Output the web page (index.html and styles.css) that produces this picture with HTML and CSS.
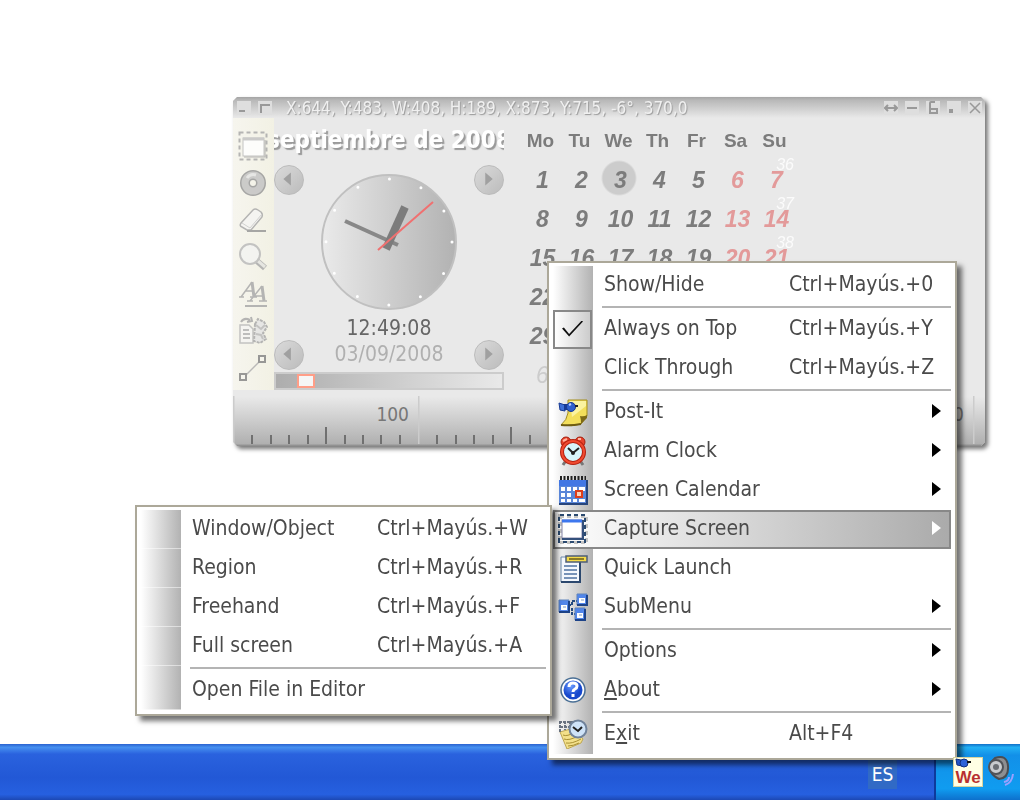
FILE: index.html
```
<!DOCTYPE html>
<html lang="en">
<head>
  <meta charset="utf-8">
  <title>Screen Calendar</title>
  <link rel="stylesheet" href="styles.css">
</head>
<body>
  <main class="desktop">
    <section class="widget">
      <div class="widget-body">
        <header class="titlebar">
          <button class="tb-button" aria-label="Minimize"><svg viewBox="0 0 14 14"><path d="M2 10h6" stroke-width="2"/></svg></button>
          <button class="tb-button" aria-label="Corner"><svg viewBox="0 0 14 14"><path d="M3 12V4h9" stroke-width="2"/></svg></button>
          <span class="title">X:644, Y:483, W:408, H:189, X:873, Y:715, -6°, 370,0</span>
          <button class="tb-button" aria-label="Width"><svg viewBox="0 0 14 14"><path d="M1 7h12M4 4L1 7l3 3M10 4l3 3-3 3" stroke-width="2"/></svg></button>
          <button class="tb-button" aria-label="Roll up"><svg viewBox="0 0 14 14"><path d="M2 7h10" stroke-width="2"/></svg></button>
          <button class="tb-button" aria-label="Lock"><svg viewBox="0 0 14 14"><path d="M4 8V2q0-1 1-1h4" stroke-width="2"/><path d="M4 8h7v4H4z" stroke-width="2"/></svg></button>
          <button class="tb-button" aria-label="Dot"><svg viewBox="0 0 14 14"><path d="M2 10h4" stroke-width="4"/></svg></button>
          <button class="tb-button" aria-label="Close"><svg viewBox="0 0 14 14"><path d="M2 2l10 10M12 2L2 12" stroke-width="1.5"/></svg></button>
        </header>

        <div class="content">
          <nav class="tools">
            <button class="tool" aria-label="Capture">
              <svg viewBox="0 0 30 30"><rect x="1.5" y="1.5" width="27" height="27" fill="none" stroke="#aaa" stroke-width="2" stroke-dasharray="4 3"/><rect x="5" y="7" width="21" height="18" fill="#fff" stroke="#bbb"/><path d="M5 8h21" stroke="#c4c4c4" stroke-width="3"/><path d="M6 26h21V9" fill="none" stroke="#aaa"/></svg>
            </button>
            <button class="tool" aria-label="Color">
              <svg viewBox="0 0 30 30"><circle cx="15" cy="15" r="8" fill="none" stroke="#999" stroke-width="10"/><circle cx="15" cy="15" r="8" fill="none" stroke="#c4c4c4" stroke-width="7"/><path d="M9 10a8 8 0 0 1 9-3" fill="none" stroke="#e4e4e4" stroke-width="3"/></svg>
            </button>
            <button class="tool" aria-label="Eraser">
              <svg viewBox="0 0 30 30"><path d="M3 18L15 5q2-2 5 0l3 2q2 2 1 5L13 25H9l-5-3q-3-1-1-4z" fill="#f5f5f3" stroke="#aaa" stroke-width="1.5"/><path d="M4 18l8 5L24 9" fill="none" stroke="#ccc"/><path d="M9 26h19" stroke="#999" stroke-width="2"/></svg>
            </button>
            <button class="tool" aria-label="Magnifier">
              <svg viewBox="0 0 30 30"><path d="M19 19l8 7" stroke="#aaa" stroke-width="6"/><path d="M20 19l7 6" stroke="#e4e4e0" stroke-width="3"/><circle cx="12" cy="12" r="10" fill="#f3f4f2" stroke="#bbb" stroke-width="2"/></svg>
            </button>
            <button class="tool" aria-label="Text">
              <svg viewBox="0 0 30 30"><path d="M3 18L14 3M7 12h8M1 18h5M12 18h7M12 22L24 7M17 17h8M9 22h6M21 22h8" fill="none" stroke="#aaa" stroke-width="1.5"/><path d="M14 3l2 15M24 7l2 15" stroke="#aaa" stroke-width="3"/><path d="M7 27h22" stroke="#aaa" stroke-width="2"/></svg>
            </button>
            <button class="tool" aria-label="Convert">
              <svg viewBox="0 0 30 30"><path d="M2 9h9l4 4v14H2z" fill="#f5f5f3" stroke="#bbb" stroke-width="1.5"/><path d="M5 14h6M5 18h7M5 22h7" stroke="#b4b4b4" stroke-width="2"/><path d="M3 6q3-5 9-2M9 6l5-1-1-4" fill="none" stroke="#aaa" stroke-width="2"/><path d="M17 8l3-5 6 3 3 5-4 6 3 6-6 4-6-2z" fill="#e4e4e4" stroke="#aaa" stroke-width="2" stroke-dasharray="3 1"/><path d="M18 9l5 4 4-4M18 18l5 1 2 4" fill="none" stroke="#bbb" stroke-width="2"/></svg>
            </button>
            <button class="tool" aria-label="Line">
              <svg viewBox="0 0 30 30"><path d="M7 23L22 8" stroke="#b0b0b0" stroke-width="1.5"/><path d="M2 21h6v6H2zM21 3h6v6h-6z" fill="#f7f6ee" stroke="#888" stroke-width="2"/></svg>
            </button>
          </nav>

          <section class="clock-panel">
            <h2 class="month">septiembre de 2008</h2>
            <div class="clock-row">
              <button class="round" aria-label="Previous month"><svg viewBox="0 0 30 30"><path d="M17 7v14l-8-7z"/></svg></button>
              <svg class="clock" viewBox="0 0 138 138">
                <defs>
                  <linearGradient id="face" x1="0" x2="1"><stop offset="0" stop-color="#eaeaea"/><stop offset="1" stop-color="#b2b2b2"/></linearGradient>
                </defs>
                <circle cx="69" cy="69" r="67" fill="url(#face)" stroke="#c0c0c0" stroke-width="2"/>
                <circle cx="69" cy="69" r="63" fill="none" stroke="#fff" stroke-width="3" stroke-linecap="round" stroke-dasharray="0 32.987"/>
                <path d="M25 48L78 72" stroke="#888" stroke-width="4"/>
                <path d="M85 34L66 76" stroke="#7c7c7c" stroke-width="8"/>
                <path d="M113 29L58 77" stroke="#f07070" stroke-width="2"/>
              </svg>
              <button class="round" aria-label="Next month"><svg viewBox="0 0 30 30"><path d="M11 7v14l8-7z"/></svg></button>
            </div>
            <div class="time-row">
              <button class="round" aria-label="Previous day"><svg viewBox="0 0 30 30"><path d="M17 7v14l-8-7z"/></svg></button>
              <div class="readout">
                <time class="time">12:49:08</time>
                <time class="date">03/09/2008</time>
              </div>
              <button class="round" aria-label="Next day"><svg viewBox="0 0 30 30"><path d="M11 7v14l8-7z"/></svg></button>
            </div>
            <input class="opacity" type="range" min="0" max="100" value="10" aria-label="Opacity">
          </section>

          <table class="calendar">
            <thead>
              <tr><th>Mo</th><th>Tu</th><th>We</th><th>Th</th><th>Fr</th><th>Sa</th><th>Su</th></tr>
            </thead>
            <tbody>
              <tr><td>1</td><td>2</td><td class="today">3</td><td>4</td><td>5</td><td class="off">6</td><td class="off">7<span class="week">36</span></td></tr>
              <tr><td>8</td><td>9</td><td>10</td><td>11</td><td>12</td><td class="off">13</td><td class="off">14<span class="week">37</span></td></tr>
              <tr><td>15</td><td>16</td><td>17</td><td>18</td><td>19</td><td class="off">20</td><td class="off">21<span class="week">38</span></td></tr>
              <tr><td>22</td><td>23</td><td>24</td><td>25</td><td>26</td><td class="off">27</td><td class="off">28<span class="week">39</span></td></tr>
              <tr><td>29</td><td>30</td><td class="other">1</td><td class="other">2</td><td class="other">3</td><td class="other">4</td><td class="other">5</td></tr>
              <tr><td class="other">6</td><td class="other">7</td><td class="other">8</td><td class="other">9</td><td class="other">10</td><td class="other">11</td><td class="other">12</td></tr>
            </tbody>
          </table>
        </div>

        <footer class="ruler">
          <div class="mark">100</div>
          <div class="mark">200</div>
          <div class="mark">300</div>
          <div class="mark">400</div>
          <svg class="ticks">
            <defs>
              <pattern id="scale" width="185" height="50" patternUnits="userSpaceOnUse">
                <path d="M19 39v9M38 39v9M56 39v9M75 39v9M112 39v9M130 39v9M148 39v9M167 39v9M93 31v17" stroke="#707070" stroke-width="2"/>
                <path d="M.5 0v48" stroke="#ccc" stroke-width="2"/>
              </pattern>
            </defs>
            <rect width="100%" height="50" fill="url(#scale)"/>
          </svg>
        </footer>
      </div>
    </section>

    <div class="menu menu-main" role="menu">
      <button class="item"><span class="gutter"></span><span class="label">Show/Hide</span><span class="key">Ctrl+Mayús.+0</span></button>
      <hr class="sep">
      <label class="item" for="on-top"><span class="gutter"><input class="tick" type="checkbox" id="on-top" checked></span><span class="label">Always on Top</span><span class="key">Ctrl+Mayús.+Y</span></label>
      <button class="item"><span class="gutter"></span><span class="label">Click Through</span><span class="key">Ctrl+Mayús.+Z</span></button>
      <hr class="sep">
      <button class="item">
        <span class="gutter"><svg class="icon" viewBox="0 0 30 30"><path d="M10 3h19v16l-6 8q-9 3-20 1 6-5 7-12z" fill="#f3df5c" stroke="#a38c1c"/><path d="M12 4h16v5L14 20z" fill="#fbf3a0"/><path d="M23 27q0-5-1-8 4 1 7-1v3z" fill="#7d6a18"/><path d="M3 28q10 1 20-1" fill="none" stroke="#6e5c12" stroke-width="2"/><path d="M1 6l6 2v6l-5-1z" fill="#3d6fd8" stroke="#173a94"/><path d="M6 10h6" stroke="#173a94" stroke-width="6"/><circle cx="13" cy="10" r="4.5" fill="#2e5fcc" stroke="#173a94"/><path d="M11 8l2-1" stroke="#bcd2ff" stroke-width="2"/><path d="M17 9h3" stroke="#222" stroke-width="2"/></svg></span>
        <span class="label">Post-It</span><span class="arrow"></span>
      </button>
      <button class="item">
        <span class="gutter"><svg class="icon" viewBox="0 0 30 30"><path d="M7 26l-2 3M23 26l2 3" stroke="#777" stroke-width="3"/><circle cx="8" cy="6" r="5" fill="#e8432c" stroke="#a3200f"/><circle cx="22" cy="6" r="5" fill="#e8432c" stroke="#a3200f"/><path d="M5 5l4-2M20 3h3" stroke="#ffb3a0" stroke-width="2"/><circle cx="15" cy="16" r="11" fill="#d8f5fb" stroke="#b3200f" stroke-width="4"/><circle cx="15" cy="16" r="11" fill="none" stroke="#f04a30" stroke-width="2"/><path d="M10 12l5 5 6-5" fill="none" stroke="#222" stroke-width="2"/><circle cx="15" cy="17" r="2" fill="#222"/></svg></span>
        <span class="label">Alarm Clock</span><span class="arrow"></span>
      </button>
      <button class="item">
        <span class="gutter"><svg class="icon" viewBox="0 0 30 30"><path d="M1 5h28v24H1z" fill="#5a86d8"/><path d="M1 5h28v6H1z" fill="#4277e4"/><path d="M2 3h26" stroke="#222" stroke-width="4" stroke-dasharray="2 1.5"/><path d="M3 12h4v4H3zM9 12h4v4H9zM15 12h4v4h-4zM21 12h6v4h-6zM3 18h4v4H3zM9 18h4v4H9zM3 24h4v3H3zM9 24h4v3H9zM15 24h4v3h-4zM21 24h6v3h-6z" fill="#fff"/><path d="M18 16h6v6h-6z" fill="#fbd0b8" stroke="#df3d18" stroke-width="2"/><path d="M1 29h28V5" fill="none" stroke="#27457c" stroke-width="2"/></svg></span>
        <span class="label">Screen Calendar</span><span class="arrow"></span>
      </button>
      <button class="item active">
        <span class="gutter"><svg class="icon" viewBox="0 0 30 30"><rect x="2" y="2" width="27" height="27" fill="none" stroke="#c4c4c4" stroke-width="4" stroke-dasharray="4 3"/><path d="M1 28V1h26v27z" fill="none" stroke="#2b4a70" stroke-width="2" stroke-dasharray="4 3"/><rect x="4" y="6" width="20" height="18" fill="#fff" stroke="#88a"/><path d="M4 7h20" stroke="#3d77ee" stroke-width="3"/><path d="M4 25h21V6" fill="none" stroke="#34507c" stroke-width="2"/></svg></span>
        <span class="label">Capture Screen</span><span class="arrow"></span>
      </button>
      <button class="item">
        <span class="gutter"><svg class="icon" viewBox="0 0 30 30"><path d="M3 4h19v25H3z" fill="#f4f8fd" stroke="#6f8cae"/><path d="M22 8v21H3" fill="none" stroke="#2c486e" stroke-width="2"/><path d="M6 13h13M6 17h13M6 21h13M6 25h13" stroke="#7793b8" stroke-width="2"/><rect x="8" y="3" width="21" height="6" fill="#f6db49" stroke="#4d5d78" stroke-width="1.5"/><path d="M11 6h15" stroke="#8b7b25" stroke-width="2"/></svg></span>
        <span class="label">Quick Launch</span>
      </button>
      <button class="item">
        <span class="gutter"><svg class="icon" viewBox="0 0 30 30"><path d="M10 13h4V9h6M14 16v6h5" fill="none" stroke="#234a80" stroke-width="2" stroke-dasharray="3 1"/><path d="M1 8h10v12H1zM19 2h10v11H19zM17 16h10v12H17z" fill="#5286ea" stroke="#5f84bd"/><path d="M3 13h6v5H3zM21 6h6v5h-6zM19 21h6v5h-6z" fill="#fff"/><path d="M1 20h10V9M19 13h10V3M17 28h10V17" fill="none" stroke="#1d4388" stroke-width="2"/><path d="M5 15h3M23 8h3M21 23h3" stroke="#7c98c4"/></svg></span>
        <span class="label">SubMenu</span><span class="arrow"></span>
      </button>
      <hr class="sep">
      <button class="item"><span class="gutter"></span><span class="label">Options</span><span class="arrow"></span></button>
      <button class="item">
        <span class="gutter"><svg class="icon" viewBox="0 0 30 30"><defs><radialGradient id="orb" cx=".4" cy=".3"><stop offset="0" stop-color="#6a9bff"/><stop offset="1" stop-color="#1748cc"/></radialGradient></defs><circle cx="15" cy="15" r="12" fill="#fff" stroke="#4b7096" stroke-width="1.5"/><circle cx="15" cy="15" r="9.5" fill="url(#orb)"/><path d="M11 12q0-4 4-4t4 3q0 2-2 3t-2 3M15 19v3" fill="none" stroke="#fff" stroke-width="3"/></svg></span>
        <span class="label"><u>A</u>bout</span><span class="arrow"></span>
      </button>
      <hr class="sep">
      <button class="item">
        <span class="gutter"><svg class="icon" viewBox="0 0 30 30"><path d="M2 13l14-4 9 11-2 4-14 6z" fill="#f3e08a" stroke="#bda653"/><path d="M5 16q4 2 12-3M6 20q5 2 14-3M8 24q6 1 15-4M10 27q5 0 11-3" fill="none" stroke="#a99033"/><path d="M1 3h14M2 8h11M2 2v11M7 2v9M12 2v6" stroke="#697280" stroke-width="2" stroke-dasharray="3 1"/><circle cx="20" cy="10" r="8.5" fill="#cfe3f8" stroke="#71839b" stroke-width="2"/><path d="M15 8l5 4 4-4" fill="none" stroke="#222" stroke-width="2"/></svg></span>
        <span class="label">E<u>x</u>it</span><span class="key">Alt+F4</span>
      </button>
    </div>

    <div class="menu menu-sub" role="menu">
      <button class="item"><span class="gutter"></span><span class="label">Window/Object</span><span class="key">Ctrl+Mayús.+W</span></button>
      <button class="item"><span class="gutter"></span><span class="label">Region</span><span class="key">Ctrl+Mayús.+R</span></button>
      <button class="item"><span class="gutter"></span><span class="label">Freehand</span><span class="key">Ctrl+Mayús.+F</span></button>
      <button class="item"><span class="gutter"></span><span class="label">Full screen</span><span class="key">Ctrl+Mayús.+A</span></button>
      <hr class="sep">
      <button class="item"><span class="gutter"></span><span class="label">Open File in Editor</span></button>
    </div>
  </main>

  <footer class="taskbar">
    <button class="lang">ES</button>
    <div class="tray">
      <div class="tray-we">
        <svg class="pin" viewBox="0 0 18 12"><path d="M2 1l5 1 1 6-5-1z" fill="#2456c8" stroke="#102f80"/><circle cx="10" cy="5" r="4" fill="#2c62d8" stroke="#102f80"/><path d="M13 4h4" stroke="#111" stroke-width="2"/></svg>
        We
      </div>
      <svg class="speaker" viewBox="0 0 32 32"><path d="M8 2q12-4 13 8t-9 13Q4 19 3 13T8 2z" fill="#8d8f92" stroke="#4a4d52" stroke-width="2"/><circle cx="9" cy="11" r="7" fill="#c9cbce" stroke="#505358" stroke-width="2"/><circle cx="9" cy="11" r="3" fill="#6b6e73"/><path d="M17 26q5-1 5-5M18 29q7-2 8-11" fill="none" stroke="#9aa0ff" stroke-width="2"/></svg>
    </div>
  </footer>
</body>
</html>
```

FILE: styles.css
```
* {
  box-sizing: border-box;
}
body {
  margin: 0;
  min-height: 100vh;
  display: flex;
  flex-direction: column;
  background: #fff;
  color: #4a4a4a;
  font-family: "DejaVu Sans Condensed", "DejaVu Sans", sans-serif;
  font-size: 21px;
  overflow: hidden;
}
button {
  padding: 0;
  border: none;
  background: none;
  color: inherit;
  font: inherit;
}
.desktop {
  flex: 1;
}

/* calendar widget */
.widget {
  position: absolute;
  left: 233px;
  top: 97px;
  width: 752px;
  filter: drop-shadow(3px 3px 2px #777);
}
.widget-body {
  background: #e9e9e9;
  clip-path: polygon(4px 0, calc(100% - 4px) 0, 100% 4px, 100% calc(100% - 4px), calc(100% - 4px) 100%, 4px 100%, 0 calc(100% - 4px), 0 4px);
}
.titlebar {
  display: flex;
  align-items: center;
  gap: 7px;
  height: 21px;
  padding: 0 3px 0 4px;
  background: linear-gradient(#a4a4a4, #b8b8b8 15%, #e9e9e9);
}
.tb-button {
  width: 14px;
  height: 14px;
  background: #dedede;
}
.tb-button svg {
  display: block;
  fill: none;
  stroke: #999;
}
.title {
  flex: 1;
  padding-left: 7px;
  color: #f0f0f0;
  font-size: 17px;
  line-height: 20px;
  white-space: nowrap;
  text-shadow: 1px 1px 1px #999;
}
.content {
  display: flex;
  height: 272px;
}
.tools {
  display: flex;
  flex-direction: column;
  width: 41px;
  padding: 9px 5px 4px;
  background: linear-gradient(90deg, #f6f5ee, #f2f1e4);
}
.tool {
  height: 37px;
}
.tool svg {
  display: block;
  width: 30px;
  height: 30px;
  opacity: 0.85;
}
.clock-panel {
  display: flex;
  flex-direction: column;
  width: 230px;
}
.month {
  display: flex;
  justify-content: center;
  height: 47px;
  margin: 0;
  overflow: hidden;
  color: #fff;
  font-size: 24px;
  line-height: 44px;
  white-space: nowrap;
  text-shadow: 2px 2px 1px #999;
}
.clock-row {
  display: flex;
  justify-content: space-between;
  align-items: flex-start;
}
.clock {
  width: 138px;
  height: 138px;
  margin-top: 8px;
}
.round {
  width: 30px;
  height: 30px;
  border: 1px solid #bbb;
  border-radius: 50%;
  background: linear-gradient(135deg, #dadada, #bcbcbc);
}
.round svg {
  display: block;
  fill: #a0a0a0;
}
.time-row {
  display: flex;
  justify-content: space-between;
  align-items: flex-end;
  height: 59px;
}
.readout {
  display: flex;
  flex-direction: column;
  align-items: center;
  padding-bottom: 3px;
  line-height: 26px;
}
.time {
  color: #666;
}
.date {
  color: #b0b0b0;
}
.opacity {
  appearance: none;
  width: 100%;
  height: 18px;
  margin: 2px 0 0;
  border: 2px solid #ccc;
  background: linear-gradient(90deg, #adadad, #e9e9e9);
}
.opacity::-webkit-slider-thumb {
  appearance: none;
  width: 18px;
  height: 14px;
  border: 2px solid #ff9e88;
  background: #f6f6f6;
}
.calendar {
  align-self: flex-start;
  margin: 3px 0 0 17px;
  border-collapse: collapse;
  table-layout: fixed;
  color: #7c7c7c;
  font-family: "Liberation Sans", Arial, sans-serif;
}
.calendar th,
.calendar td {
  width: 39px;
  height: 39px;
  padding: 0;
  text-align: center;
}
.calendar th {
  font-size: 19px;
}
.calendar td {
  position: relative;
  padding: 2px 0 0 4px;
  font-size: 23px;
  font-weight: bold;
  font-style: italic;
}
.calendar .off {
  color: #e39a9a;
}
.calendar .other {
  color: #ccc;
  font-weight: normal;
}
.calendar .today {
  background: radial-gradient(circle at 20px 18px, #ccc 16px, transparent 18px);
}
.week {
  position: absolute;
  right: 0;
  top: -4px;
  color: #fbfbfb;
  font-size: 16px;
  font-weight: normal;
}
.ruler {
  position: relative;
  display: flex;
  height: 56px;
  padding-top: 7px;
  background: linear-gradient(#e9e9e9 12%, #b0b0b0 96%, #888);
}
.mark {
  width: 185px;
  padding-right: 9px;
  color: #777;
  font-size: 19px;
  line-height: 34px;
  text-align: right;
}
.ticks {
  position: absolute;
  left: 0;
  bottom: 0;
  width: 100%;
  height: 50px;
}

/* popup menus */
.menu {
  position: absolute;
  padding: 3px 4px 4px;
  border: 2px solid #aca899;
  background: linear-gradient(90deg, #fff, #b2b2b2) 4px 3px / 40px calc(100% - 7px) no-repeat #fff;
  box-shadow: 5px 5px 5px rgba(0, 0, 0, 0.55);
}
.menu-main {
  left: 547px;
  top: 261px;
  width: 410px;
}
.menu-sub {
  left: 135px;
  top: 505px;
  width: 417px;
}
.item {
  display: flex;
  align-items: center;
  width: 100%;
  height: 39px;
  text-align: left;
  white-space: nowrap;
}
.gutter {
  display: flex;
  align-items: center;
  justify-content: center;
  width: 40px;
  height: 39px;
  margin-right: 11px;
  padding-bottom: 1px;
}
.menu-sub .gutter {
  border-bottom: 1px solid rgba(255, 255, 255, 0.5);
}
.icon {
  width: 30px;
  height: 30px;
}
.label {
  width: 185px;
}
.label,
.key,
.arrow {
  margin-bottom: 3px;
}
.arrow {
  margin-left: auto;
  margin-right: 10px;
  border: 7px solid transparent;
  border-left: 9px solid #000;
  border-right: none;
}
.active {
  background: linear-gradient(90deg, #fff, #aaa);
  box-shadow: inset 0 0 0 2px #888;
}
.active .arrow {
  border-left-color: #fff;
}
.sep {
  height: 2px;
  margin: 1px 0 2px 49px;
  border: none;
  background: #b4b4b4;
}
.tick {
  appearance: none;
  width: 39px;
  height: 39px;
  margin: 0 1px 0 0;
  border: 2px solid #888;
  background: linear-gradient(90deg, #fff, #ccc);
}
.tick:checked::before {
  content: "";
  display: block;
  width: 21px;
  height: 16px;
  margin: 9px 7px;
  background: #111;
  clip-path: polygon(0 50%, 9% 44%, 34% 84%, 94% 0, 100% 7%, 34% 100%);
}

/* taskbar */
.taskbar {
  display: flex;
  justify-content: flex-end;
  align-items: center;
  height: 56px;
  background: linear-gradient(#2a62d0, #4690f0 6%, #2a62de 18%, #2258d6 60%, #2660e0 90%, #1c48b4);
}
.lang {
  width: 29px;
  height: 29px;
  margin: 4px 37px 0 0;
  background: #316ac5;
  color: #fff;
  font-size: 19px;
}
.tray {
  display: flex;
  align-items: center;
  gap: 4px;
  width: 86px;
  height: 56px;
  padding-left: 17px;
  border-left: 2px solid #0e3a9c;
  background: linear-gradient(#1270c8, #22b0f4 6%, #1290e8 20%, #109cf0 80%, #0d70cc);
}
.tray-we {
  position: relative;
  width: 30px;
  height: 30px;
  padding-top: 10px;
  border: 1px solid #d8d4a0;
  background: #ffffe4;
  color: #b83030;
  font: bold 17px/20px "Liberation Sans", Arial, sans-serif;
  text-align: center;
}
.pin {
  position: absolute;
  left: 0;
  top: 0;
  width: 18px;
  height: 12px;
}
.speaker {
  width: 32px;
  height: 32px;
}
```
